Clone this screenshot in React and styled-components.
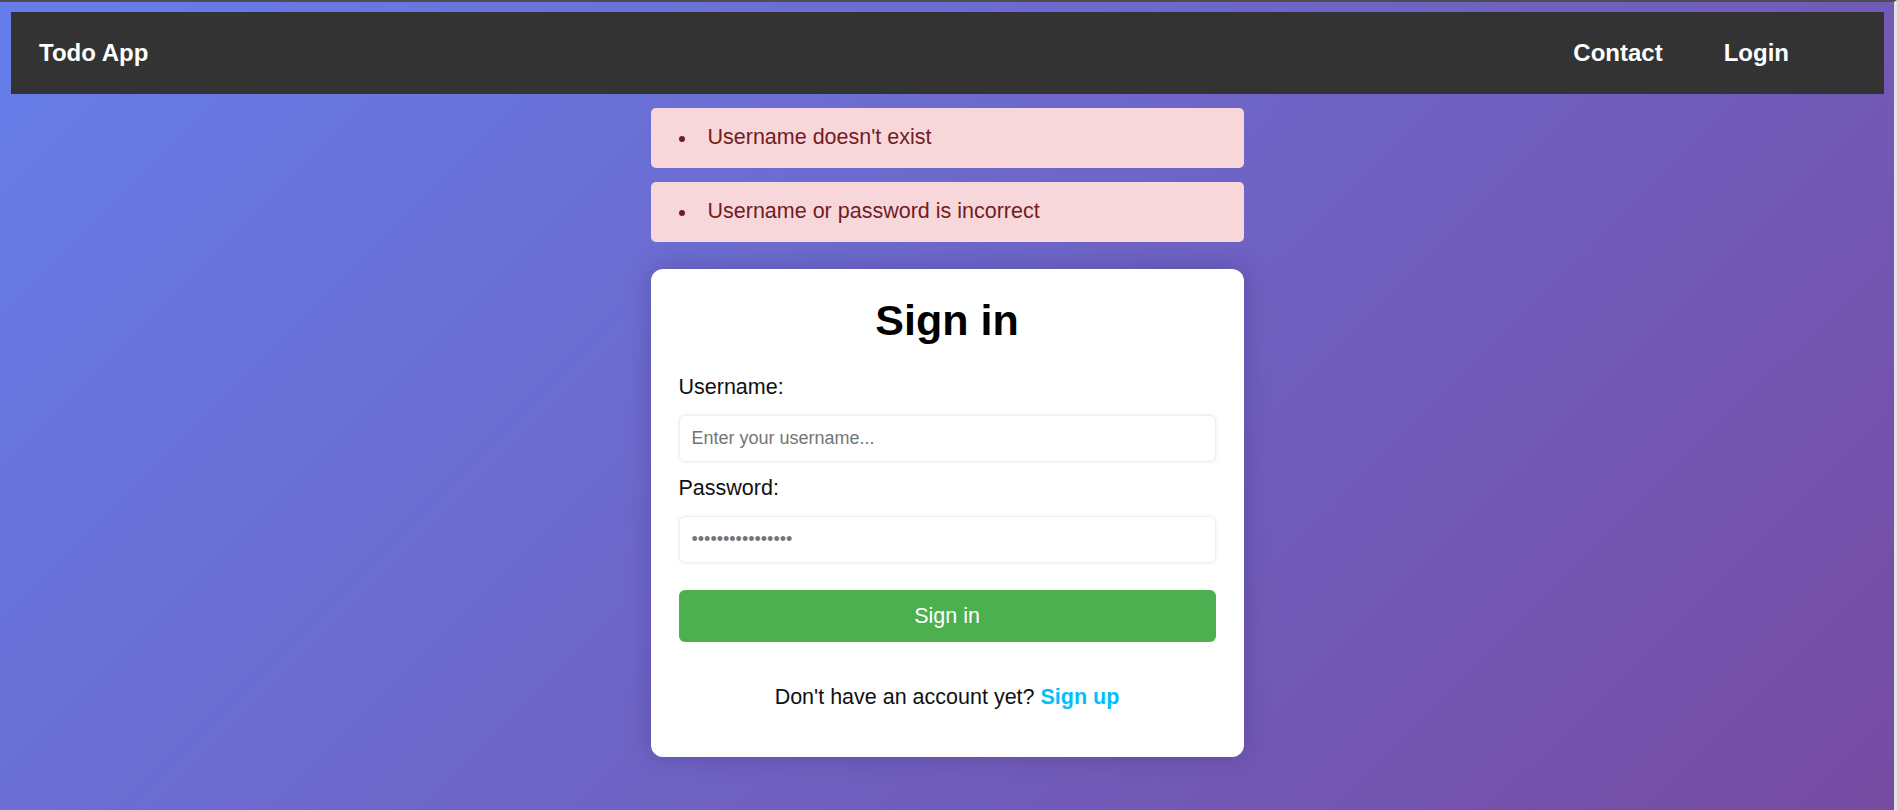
import React from 'react';
import styled, { createGlobalStyle } from 'styled-components';

const GlobalStyle = createGlobalStyle`
  * {
    box-sizing: border-box;
  }

  body {
    margin: 0;
    font-family: "Liberation Sans", Arial, sans-serif;
  }
`;

const Page = styled.div`
  min-height: 100vh;
  border-top: 2px solid #4d4d4d;
  border-right: 3px solid #e4e4e4;
  background: linear-gradient(135deg, #667eea 0%, #764ba2 100%);
  padding-bottom: 40px;
`;

const Navbar = styled.nav`
  display: flex;
  justify-content: space-between;
  align-items: center;
  height: 82px;
  margin: 10px 10px 10px 11px;
  padding: 0 28px;
  background: #333;
`;

const NavLogo = styled.a`
  color: #fff;
  font-size: 24px;
  font-weight: bold;
  text-decoration: none;
`;

const NavLinks = styled.div`
  display: flex;
  align-items: center;
  gap: 61px;
  margin-right: 67px;
`;

const NavLink = styled.a`
  color: #fff;
  font-size: 24px;
  font-weight: bold;
  text-decoration: none;
`;

const Main = styled.main`
  display: flex;
  flex-direction: column;
  align-items: center;
  padding-top: 4px;
`;

const Alert = styled.div`
  width: 593px;
  margin-bottom: ${(props) => props.$gap || 14}px;
  padding: 17px 17px 18px 0;
  background: #f8d7da;
  color: #721c24;
  border-radius: 5px;
  font-size: 21.5px;
`;

const ErrorList = styled.ul`
  margin: 0;
  padding-left: 57px;
  list-style: none;
`;

/* bullet drawn by hand so it sits further from the text, as in the design */
const ErrorItem = styled.li`
  position: relative;

  &::before {
    content: '';
    position: absolute;
    left: -29px;
    top: 50%;
    width: 6px;
    height: 6px;
    margin-top: -2px;
    border-radius: 50%;
    background: #721c24;
  }
`;

const Card = styled.div`
  width: 593px;
  padding: 27px 28px 47px;
  background: #fff;
  border-radius: 12px;
  box-shadow: 0 0 24px rgba(40, 20, 90, 0.25);
`;

const Title = styled.h1`
  margin: 0 0 30px;
  text-align: center;
  font-size: 43px;
  font-weight: bold;
  color: #000;
`;

const Label = styled.label`
  display: block;
  margin-bottom: 15px;
  font-size: 21.5px;
  color: #111;
`;

const Input = styled.input`
  display: block;
  width: 100%;
  height: 47px;
  margin-bottom: 14px;
  padding: 0 12px;
  border: 1px solid #eee;
  border-radius: 6px;
  box-shadow: 0 0 5px rgba(0, 0, 0, 0.07);
  font-family: "Liberation Sans", Arial, sans-serif;
  font-size: 18px;
  outline: none;

  &::placeholder {
    color: #757575;
  }
`;

const Button = styled.button`
  display: block;
  width: 100%;
  height: 52px;
  margin-top: 27px;
  border: none;
  border-radius: 6px;
  background: #4caf50;
  color: #fff;
  font-family: "Liberation Sans", Arial, sans-serif;
  font-size: 21.5px;
  cursor: pointer;
`;

const Footer = styled.p`
  margin: 43px 0 0;
  text-align: center;
  font-size: 21.5px;
  color: #111;
`;

const SignUpLink = styled.a`
  color: #00bfff;
  font-weight: bold;
  text-decoration: none;
`;

const errors = ["Username doesn't exist", 'Username or password is incorrect'];

function App() {
  return (
    <Page>
      <GlobalStyle />
      <Navbar>
        <NavLogo href="#">Todo App</NavLogo>
        <NavLinks>
          <NavLink href="#">Contact</NavLink>
          <NavLink href="#">Login</NavLink>
        </NavLinks>
      </Navbar>

      <Main>
        {errors.map((err, i) => (
          <Alert key={err} $gap={i === errors.length - 1 ? 27 : 14}>
            <ErrorList>
              <ErrorItem>{err}</ErrorItem>
            </ErrorList>
          </Alert>
        ))}

        <Card>
          <Title>Sign in</Title>
          <Label>Username:</Label>
          <Input type="text" placeholder="Enter your username..." />
          <Label>Password:</Label>
          <Input type="password" placeholder="••••••••••••••••" />
          <Button>Sign in</Button>
          <Footer>
            Don't have an account yet? <SignUpLink href="#">Sign up</SignUpLink>
          </Footer>
        </Card>
      </Main>
    </Page>
  );
}

export default App;
